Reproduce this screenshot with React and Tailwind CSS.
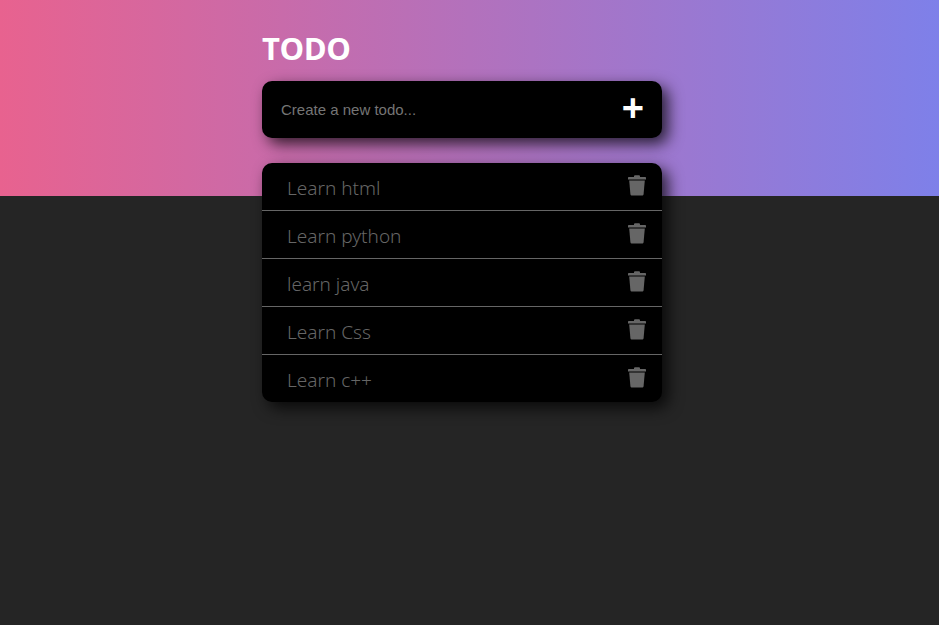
import React from 'react'

const todos = ['Learn html', 'Learn python', 'learn java', 'Learn Css', 'Learn c++']

const TrashIcon = () => (
  <svg width="18" height="21" viewBox="0 0 18 21" className="fill-[#666666]">
    <path d="M6 1.5 C6 .7 6.6 .3 7.2 .3 H10.8 C11.4 .3 12 .7 12 1.5 V2 H17 C17.6 2 18 2.4 18 3 V4.4 H0 V3 C0 2.4 .4 2 1 2 H6 Z" />
    <path d="M1.2 5.4 H16.8 L15.6 19 C15.5 20 14.9 20.6 14 20.6 H4 C3.1 20.6 2.5 20 2.4 19 Z" />
  </svg>
)

const App = () => {
  return (
    <div className="min-h-[625px] bg-[#252525]">
      {/* Gradient header, the column hangs over its lower edge */}
      <div className="h-[196px] bg-[linear-gradient(to_right,#e8628f,#7e80e9)]">
        <div className="ml-[262px] w-[400px] pt-[30px]">
          <h1 className="h-[51px] font-['Open_Sans',sans-serif] text-[31px] leading-[36px] font-bold tracking-[-0.4px] text-white">TODO</h1>

          <div className="flex h-[57px] items-center justify-between rounded-[10px] bg-black pr-[18px] pl-[19px] shadow-[6px_6px_15px_rgba(0,0,0,0.75)]">
            <input
              placeholder="Create a new todo..."
              className="mt-[1px] w-[300px] bg-transparent font-['Liberation_Sans',sans-serif] text-[15px] text-white outline-none placeholder:text-[#757575]"
            />
            <button className="mb-[4px] font-['Liberation_Sans',sans-serif] text-[38px] leading-none font-bold text-white">+</button>
          </div>

          <ul className="mt-[25px] overflow-hidden rounded-[10px] bg-black shadow-[6px_6px_15px_rgba(0,0,0,0.75)]">
            {todos.map((todo, index) => (
              <li
                key={index}
                className="flex h-[48px] items-start justify-between border-b border-[#666666] pt-[12px] pr-[16px] pl-[25px] last:h-[47px] last:border-b-0"
              >
                <span className="font-['Noto_Sans',sans-serif] text-[19px] leading-[26px] font-light text-[#666666]">{todo}</span>
                <TrashIcon />
              </li>
            ))}
          </ul>
        </div>
      </div>
    </div>
  )
}

export default App
